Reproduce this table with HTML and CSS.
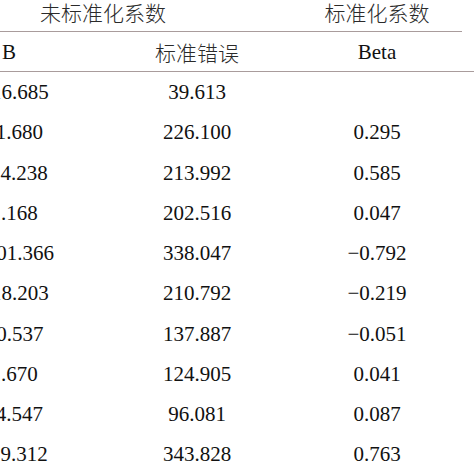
FILE: index.html
```html
<!DOCTYPE html>
<html lang="zh">
<head>
<meta charset="utf-8">
<link rel="stylesheet" href="styles.css">
</head>
<body>
<table class="coef">
  <colgroup>
    <col class="c1"><col class="c2"><col class="c3"><col class="c4">
  </colgroup>
  <thead>
    <tr class="group">
      <th colspan="2" class="zh rule span-left">未标准化系数</th>
      <th class="zh rule">标准化系数</th>
      <th></th>
    </tr>
    <tr class="sub">
      <th class="rule b-head">B</th>
      <th class="zh rule">标准错误</th>
      <th class="rule">Beta</th>
      <th class="rule"></th>
    </tr>
  </thead>
  <tbody>
    <tr><td>−16.685</td><td>39.613</td><td></td><td></td></tr>
    <tr><td>51.680</td><td>226.100</td><td>0.295</td><td></td></tr>
    <tr><td>114.238</td><td>213.992</td><td>0.585</td><td></td></tr>
    <tr><td>1.168</td><td>202.516</td><td>0.047</td><td></td></tr>
    <tr><td>−301.366</td><td>338.047</td><td>−0.792</td><td></td></tr>
    <tr><td>−18.203</td><td>210.792</td><td>−0.219</td><td></td></tr>
    <tr><td>−0.537</td><td>137.887</td><td>−0.051</td><td></td></tr>
    <tr><td>1.670</td><td>124.905</td><td>0.041</td><td></td></tr>
    <tr><td>24.547</td><td>96.081</td><td>0.087</td><td></td></tr>
    <tr><td>119.312</td><td>343.828</td><td>0.763</td><td></td></tr>
  </tbody>
</table>
</body>
</html>
```
FILE: styles.css
```css
html, body {
  margin: 0;
  padding: 0;
  background: #ffffff;
  overflow: hidden;
}
body {
  width: 474px;
  height: 474px;
}
.coef {
  border-collapse: collapse;
  table-layout: fixed;
  width: 590px;
  margin-left: -74px;
  font-family: "Liberation Serif", "Noto Sans CJK SC", serif;
  font-size: 21px;
  color: #111111;
}
.c1 { width: 176px; }
.c2 { width: 190px; }
.c3 { width: 170px; }
.c4 { width: 54px; }
.coef th, .coef td {
  padding: 0;
  text-align: center;
  font-weight: normal;
  line-height: 24px;
  white-space: nowrap;
}
.coef .zh {
  font-family: "Noto Sans CJK SC", sans-serif;
  font-weight: 300;
  color: #2a2a2a;
}
.group th {
  height: 31px;
  vertical-align: top;
  padding-top: 0;
}
.group .span-left {
  padding-right: 12px;
}
.sub th {
  height: 38px;
  vertical-align: middle;
  padding-top: 1px;
}
.sub .b-head {
  padding-right: 10px;
}
.rule {
  border-bottom: 1px solid #a99c9c;
}
.coef tbody td {
  height: 40.25px;
  vertical-align: middle;
  padding-top: 1px;
  box-sizing: border-box;
}
```
